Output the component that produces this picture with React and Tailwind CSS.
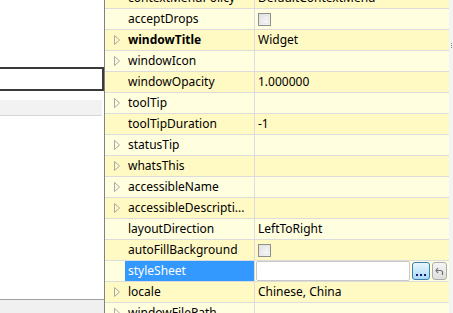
import React from "react";

const rows = [
  { name: "contextMenuPolicy", value: "DefaultContextMenu", arrow: false },
  { name: "acceptDrops", check: true },
  { name: "windowTitle", value: "Widget", arrow: true, bold: true },
  { name: "windowIcon", arrow: true },
  { name: "windowOpacity", value: "1.000000" },
  { name: "toolTip", arrow: true },
  { name: "toolTipDuration", value: "-1" },
  { name: "statusTip", arrow: true },
  { name: "whatsThis", arrow: true },
  { name: "accessibleName", arrow: true },
  { name: "accessibleDescripti...", arrow: true },
  { name: "layoutDirection", value: "LeftToRight" },
  { name: "autoFillBackground", check: true },
  { name: "styleSheet", selected: true, editor: true },
  { name: "locale", value: "Chinese, China", arrow: true },
  { name: "windowFilePath", arrow: true },
];

function Arrow() {
  return (
    <svg width="8" height="12" viewBox="0 0 8 12" className="block">
      <path d="M1.5 1.5 L6.5 6 L1.5 10.5 Z" fill="none" stroke="#a8a8a8" strokeWidth="1" />
    </svg>
  );
}

function Check() {
  return (
    <div className="w-[13px] h-[13px] border border-[#8e8f8f] bg-gradient-to-br from-[#dcdcdc] to-[#f8f8f8] p-[1px]">
      <div className="w-full h-full border border-[#e8e8e8] bg-gradient-to-br from-[#e4e4e4] to-[#fafafa]" />
    </div>
  );
}

function Row({ r, i }) {
  const light = i % 2 === 1;
  const bg = light ? "bg-[#fffedf]" : "bg-[#fff9c4]";
  return (
    <div className={`flex h-[21px] border-b border-[#dcdcdc] ${bg}`}>
      <div className="w-[20px] flex items-center justify-center pl-[4px]">
        {r.arrow ? <Arrow /> : null}
      </div>
      <div
        className={`w-[129px] flex items-center pl-[3px] whitespace-nowrap overflow-hidden ${
          r.selected ? "bg-[#3399ff] text-white" : "text-black"
        } ${r.bold ? "font-bold" : ""}`}
      >
        {r.name}
      </div>
      <div className="w-px bg-[#dcdcdc]" />
      <div className="flex-1 flex items-center pl-[3px] whitespace-nowrap overflow-hidden">
        {r.check ? <Check /> : null}
        {r.value ? r.value : null}
        {r.editor ? (
          <div className="flex items-center w-full -ml-[2px] gap-[2px]">
            <div className="flex-1 h-[20px] bg-white border border-[#c8c8c8] rounded-[2px]" />
            <div className="w-[18px] h-[18px] border border-[#3c7fb1] rounded-[3px] bg-gradient-to-b from-[#eaf6fd] to-[#a7d9f5] flex items-end justify-center pb-[3px]">
              <div className="flex gap-[2px]">
                <div className="w-[2px] h-[2px] bg-[#1a1a6a]" />
                <div className="w-[2px] h-[2px] bg-[#1a1a6a]" />
                <div className="w-[2px] h-[2px] bg-[#1a1a6a]" />
              </div>
            </div>
            <div className="w-[15px] h-[18px] border border-[#acacac] rounded-[3px] bg-gradient-to-b from-[#f6f6f6] to-[#dedede] flex items-center justify-center">
              <svg width="9" height="9" viewBox="0 0 9 9">
                <path d="M3 1 L1 3.5 L3 6" fill="none" stroke="#707070" strokeWidth="1.2" />
                <path d="M1.5 3.5 H5.5 Q7.5 3.5 7.5 5.5 V8" fill="none" stroke="#707070" strokeWidth="1.2" />
              </svg>
            </div>
          </div>
        ) : null}
      </div>
    </div>
  );
}

export default function App() {
  return (
    <div
      className="w-[453px] h-[313px] overflow-hidden flex bg-white text-[12px] leading-none"
      style={{ fontFamily: '"Noto Sans", "DejaVu Sans", sans-serif' }}
    >
      <div className="w-[104px] flex flex-col shrink-0">
        <div className="h-[67px] bg-white" />
        <div className="h-[24px] border-y-2 border-r-2 border-[#3a3a3a] bg-white" />
        <div className="h-[9px] bg-white" />
        <div className="h-[16px] w-[102px] bg-[#f2f2f2] border-b border-[#d6d6d6]" />
        <div className="flex-1 bg-white" />
        <div className="h-[14px] bg-[#f0f0f0] border-t border-[#a0a0a0]" />
      </div>
      <div className="w-px bg-[#828282] shrink-0" />
      <div className="w-[344px] shrink-0 overflow-hidden">
        <div className="-mt-[12px]">
          {rows.map((r, i) => (
            <Row key={i} r={r} i={i} />
          ))}
        </div>
      </div>
      <div className="flex-1 bg-[#f4f4f4] flex flex-col items-center pt-[43px]">
        <div className="flex flex-col gap-[1px]">
          <div className="w-[1px] h-[1px] bg-[#808080]" />
          <div className="w-[1px] h-[1px] bg-[#808080]" />
          <div className="w-[1px] h-[1px] bg-[#808080]" />
        </div>
      </div>
    </div>
  );
}
